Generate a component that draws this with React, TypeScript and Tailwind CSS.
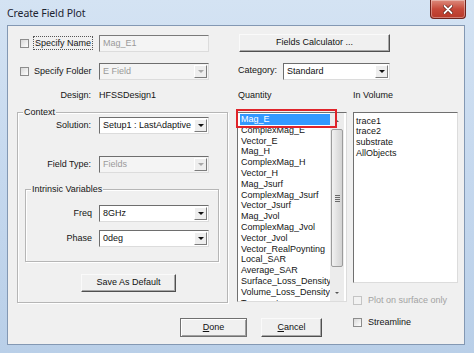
import React from "react";

const quantities = [
  "Mag_E",
  "ComplexMag_E",
  "Vector_E",
  "Mag_H",
  "ComplexMag_H",
  "Vector_H",
  "Mag_Jsurf",
  "ComplexMag_Jsurf",
  "Vector_Jsurf",
  "Mag_Jvol",
  "ComplexMag_Jvol",
  "Vector_Jvol",
  "Vector_RealPoynting",
  "Local_SAR",
  "Average_SAR",
  "Surface_Loss_Density",
  "Volume_Loss_Density",
  "Temperature",
];

const volumes = ["trace1", "trace2", "substrate", "AllObjects"];

function Check({ disabled }: { disabled?: boolean }) {
  return (
    <span
      className={
        disabled
          ? "block w-[9px] h-[9px] shrink-0 border border-[#c4c4c4] bg-[#f2f2f2]"
          : "block w-[9px] h-[9px] shrink-0 border border-[#8c8c8c] bg-gradient-to-br from-[#d8d8d8] to-white"
      }
    />
  );
}

function Arrow({ disabled }: { disabled?: boolean }) {
  return (
    <span className="flex w-[13px] h-full shrink-0 items-center justify-center border border-t-white border-l-white border-b-[#7c7c7c] border-r-[#7c7c7c] bg-[#eeeeee]">
      <span
        className={
          disabled
            ? "block w-0 h-0 border-l-[3px] border-r-[3px] border-t-[3px] border-l-transparent border-r-transparent border-t-[#a8a8a8]"
            : "block w-0 h-0 border-l-[3px] border-r-[3px] border-t-[3px] border-l-transparent border-r-transparent border-t-[#111]"
        }
      />
    </span>
  );
}

function Combo({ w, text, disabled }: { w: string; text: string; disabled?: boolean }) {
  return (
    <div
      className={`flex h-[17px] ${w} shrink-0 items-stretch border border-t-[#6e6e6e] border-l-[#6e6e6e] border-b-[#dcdcdc] border-r-[#dcdcdc] p-[1px] ${
        disabled ? "bg-[#f4f4f4] text-[#9a9a9a]" : "bg-white text-[#111]"
      }`}
    >
      <span className="flex-1 pl-[2px] leading-[13px]">{text}</span>
      <Arrow disabled={disabled} />
    </div>
  );
}

function Btn({ w, h, children, main }: { w: string; h: string; children: React.ReactNode; main?: boolean }) {
  return (
    <div
      className={`flex ${w} ${h} shrink-0 items-center justify-center bg-[#f0f0f0] text-[#111] border ${
        main
          ? "border-[#707070] shadow-[inset_1px_1px_0_#ffffff,inset_-1px_-1px_0_#a0a0a0]"
          : "border-t-[#fafafa] border-l-[#fafafa] border-b-[#505050] border-r-[#505050] shadow-[inset_-1px_-1px_0_#a8a8a8]"
      }`}
    >
      {children}
    </div>
  );
}

function Group({ label, className, children }: { label: string; className: string; children: React.ReactNode }) {
  return (
    <div
      className={`relative border border-[#b6b6b6] shadow-[inset_1px_1px_0_#ffffff,1px_1px_0_#ffffff] ${className}`}
    >
      <span className="absolute -top-[7px] left-[5px] bg-[#f0f0f0] px-[1px] leading-[12px]">{label}</span>
      {children}
    </div>
  );
}

export default function App() {
  return (
    <div className="relative w-[474px] h-[353px] overflow-hidden bg-gradient-to-b from-[#d4e3f3] via-[#c5d8ee] to-[#b9cfe8] font-['Liberation_Sans',Arial,sans-serif] text-[9px] text-[#151515]">
      {/* Title bar */}
      <div className="flex h-[25px] items-start pl-[7px] pr-[8px]">
        <span className="mt-[6px] text-[10.5px] leading-[14px] text-[#1c2430] font-['Noto_Sans',sans-serif] tracking-[-0.1px]">
          Create Field Plot
        </span>
        <div className="ml-auto flex h-[19px] w-[36px] items-center justify-center rounded-b-[4px] border border-t-0 border-[#6e231c] bg-gradient-to-b from-[#dc8a7c] via-[#c6493a] to-[#b73a2a] shadow-[inset_0_0_0_1px_rgba(255,255,255,0.35)]">
          <svg width="10" height="9" viewBox="0 0 10 9">
            <path d="M1.5 1 L8.5 8 M8.5 1 L1.5 8" stroke="#5a1a12" strokeWidth="3.2" strokeLinecap="round" />
            <path d="M1.5 1 L8.5 8 M8.5 1 L1.5 8" stroke="#ffffff" strokeWidth="1.8" strokeLinecap="round" />
          </svg>
        </div>
      </div>

      {/* Client area */}
      <div className="ml-[7px] mr-[9px] h-[320px] border border-[#8398b3] bg-[#f0f0f0]">
        {/* Row 1 */}
        <div className="mt-[8px] flex h-[18px] items-center pl-[12px]">
          <div className="flex w-[79px] items-center">
            <Check />
            <span className="ml-[4px] border border-dotted border-[#555] px-[1px] leading-[12px]">Specify Name</span>
          </div>
          <div className="h-[17px] w-[110px] border border-t-[#7a7a7a] border-l-[#7a7a7a] border-b-[#dcdcdc] border-r-[#dcdcdc] bg-[#f4f4f4] pl-[3px] leading-[15px] text-[#9a9a9a]">
            Mag_E1
          </div>
          <div className="ml-[30px]">
            <Btn w="w-[151px]" h="h-[18px]">Fields Calculator ...</Btn>
          </div>
        </div>

        {/* Row 2 */}
        <div className="mt-[10px] flex h-[18px] items-center pl-[12px]">
          <div className="flex w-[79px] items-center">
            <Check />
            <span className="ml-[5px] leading-[12px]">Specify Folder</span>
          </div>
          <Combo w="w-[110px]" text="E Field" disabled />
          <span className="ml-[29px] w-[45px]">Category:</span>
          <Combo w="w-[107px]" text="Standard" />
        </div>

        {/* Main */}
        <div className="flex pl-[9px]">
          <div className="flex flex-col">
            <div className="flex">
              {/* Left column */}
              <div className="flex w-[211px] flex-col">
                <div className="flex h-[32px] items-center">
                  <span className="w-[74px] text-right">Design:</span>
                  <span className="ml-[8px]">HFSSDesign1</span>
                </div>
                <Group label="Context" className="h-[191px] w-[211px]">
                  <div className="mt-[4px] flex items-center">
                    <span className="w-[73px] text-right">Solution:</span>
                    <div className="ml-[8px]">
                      <Combo w="w-[110px]" text="Setup1 : LastAdaptive" />
                    </div>
                  </div>
                  <div className="mt-[22px] flex items-center">
                    <span className="w-[73px] text-right">Field Type:</span>
                    <div className="ml-[8px]">
                      <Combo w="w-[110px]" text="Fields" disabled />
                    </div>
                  </div>
                  <Group label="Intrinsic Variables" className="ml-[7px] mt-[16px] h-[73px] w-[194px]">
                    <div className="mt-[15px] flex items-center">
                      <span className="w-[66px] text-right">Freq</span>
                      <div className="ml-[7px]">
                        <Combo w="w-[110px]" text="8GHz" />
                      </div>
                    </div>
                    <div className="mt-[8px] flex items-center">
                      <span className="w-[66px] text-right">Phase</span>
                      <div className="ml-[7px]">
                        <Combo w="w-[110px]" text="0deg" />
                      </div>
                    </div>
                  </Group>
                  <div className="ml-[63px] mt-[12px]">
                    <Btn w="w-[95px]" h="h-[18px]">Save As Default</Btn>
                  </div>
                </Group>
              </div>

              {/* Quantity column */}
              <div className="ml-[9px] flex w-[110px] flex-col">
                <div className="flex h-[32px] items-center pl-[1px]">Quantity</div>
                <div className="relative flex h-[190px] overflow-hidden border border-t-[#707070] border-l-[#707070] border-b-[#dcdcdc] border-r-[#dcdcdc] bg-white pr-[2px]">
                  <div className="flex-1 overflow-hidden pt-[1px]">
                    {quantities.map((q, i) => (
                      <div
                        key={q}
                        className={
                          i === 0
                            ? "ml-[2px] bg-[#3399ff] pl-[1px] leading-[10.8px] text-white"
                            : "ml-[2px] pl-[1px] leading-[10.8px] whitespace-nowrap"
                        }
                      >
                        {q}
                      </div>
                    ))}
                  </div>
                  {/* scrollbar */}
                  <div className="flex w-[14px] shrink-0 flex-col bg-[#ececec]">
                    <div className="flex h-[16px] items-center justify-center">
                      <span className="block w-0 h-0 border-l-[2px] border-r-[2px] border-b-[2px] border-l-transparent border-r-transparent border-b-[#555]" />
                    </div>
                    <div className="mx-[1px] flex h-[138px] items-center justify-center rounded-[2px] border border-[#9c9c9c] bg-gradient-to-r from-[#f2f2f2] via-[#e2e2e2] to-[#d4d4d4]">
                      <div className="flex flex-col gap-[1px]">
                        <span className="block h-px w-[5px] bg-[#6a6a6a]" />
                        <span className="block h-px w-[5px] bg-[#6a6a6a]" />
                        <span className="block h-px w-[5px] bg-[#6a6a6a]" />
                        <span className="block h-px w-[5px] bg-[#6a6a6a]" />
                      </div>
                    </div>
                    <div className="flex-1" />
                    <div className="flex h-[16px] items-center justify-center">
                      <span className="block w-0 h-0 border-l-[2px] border-r-[2px] border-t-[2px] border-l-transparent border-r-transparent border-t-[#555]" />
                    </div>
                  </div>
                </div>
              </div>
            </div>

            {/* Bottom buttons */}
            <div className="mt-[15px] flex pl-[163px]">
              <Btn w="w-[67px]" h="h-[19px]" main>
                <span>
                  <span className="underline">D</span>one
                </span>
              </Btn>
              <div className="ml-[14px]">
                <Btn w="w-[61px]" h="h-[19px]">
                  <span>
                    <span className="underline">C</span>ancel
                  </span>
                </Btn>
              </div>
            </div>
          </div>

          {/* Right column */}
          <div className="ml-[6px] flex w-[105px] flex-col">
            <div className="flex h-[32px] items-center">In Volume</div>
            <div className="h-[171px] border border-t-[#707070] border-l-[#707070] border-b-[#dcdcdc] border-r-[#dcdcdc] bg-white pl-[2px] pt-[2.6px]">
              {volumes.map((v) => (
                <div key={v} className="leading-[10.8px]">
                  {v}
                </div>
              ))}
            </div>
            <div className="mt-[12px] flex items-center">
              <Check disabled />
              <span className="ml-[6px] leading-[10px] text-[#a3a3a3]">Plot on surface only</span>
            </div>
            <div className="mt-[12px] flex items-center">
              <Check />
              <span className="ml-[6px] leading-[10px]">Streamline</span>
            </div>
          </div>
        </div>
      </div>

      {/* Red highlight annotation */}
      <div className="absolute left-[236px] top-[109px] h-[19px] w-[101px] border-2 border-[#e0242a]" />
    </div>
  );
}
